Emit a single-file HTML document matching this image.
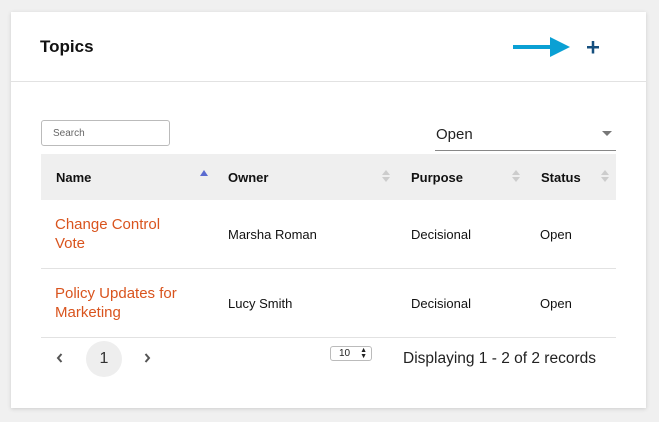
<!DOCTYPE html>
<html><head><style>
*{margin:0;padding:0;box-sizing:border-box}
body{width:659px;height:422px;background:#f0f0f0;font-family:"Liberation Sans",Arial,sans-serif;position:relative;overflow:hidden}
.card{position:absolute;left:11px;top:12px;width:635px;height:396px;background:#fff;box-shadow:0 1px 4px rgba(0,0,0,.15)}
.abs{position:absolute}
.title{left:29px;top:25px;font-size:17px;font-weight:bold;color:#111}
.hline{left:0;top:69px;width:635px;height:1px;background:#e2e2e2}
.search{left:30px;top:108px;width:129px;height:26px;border:1px solid #bbb;border-radius:3px;font-size:10px;color:#666;padding:7px 0 0 11px}
.sel{left:424px;top:114px;width:181px;height:25px;border-bottom:1px solid #888;font-size:15px;color:#222;padding-left:1px}
.thead{left:30px;top:142px;width:575px;height:46px;background:#efefef}
.th{top:158px;font-size:13px;font-weight:bold;color:#111}
.td{font-size:13px;color:#111}
.link{font-size:15px;color:#d9541e;line-height:19px}
.rl{left:30px;width:575px;height:1px;background:#e2e2e2}
.sort{width:0;height:0;border-left:4px solid transparent;border-right:4px solid transparent}
</style></head><body>
<div class="card">
<div class="abs title">Topics</div>
<svg class="abs" style="left:501px;top:22px" width="90" height="26"><rect x="1" y="11" width="40" height="4" fill="#0aa0d4"/><polygon points="38,3 58,13 38,23" fill="#0aa0d4"/><rect x="75" y="12" width="12" height="2.5" fill="#154f7e"/><rect x="79.75" y="7" width="2.5" height="12.5" fill="#154f7e"/></svg>
<div class="abs hline"></div>
<div class="abs search">Search</div>
<div class="abs sel">Open<div class="abs" style="right:4px;top:5px;width:0;height:0;border-left:5px solid transparent;border-right:5px solid transparent;border-top:5px solid #777"></div></div>
<div class="abs thead"></div>
<div class="abs th" style="left:45px">Name</div>
<div class="abs sort" style="left:189px;top:158px;border-bottom:6px solid #5a6bd0"></div>
<div class="abs th" style="left:217px">Owner</div>
<div class="abs sort" style="left:371px;top:158px;border-bottom:5px solid #ccc"></div><div class="abs sort" style="left:371px;top:165px;border-top:5px solid #ccc"></div>
<div class="abs th" style="left:400px">Purpose</div>
<div class="abs sort" style="left:501px;top:158px;border-bottom:5px solid #ccc"></div><div class="abs sort" style="left:501px;top:165px;border-top:5px solid #ccc"></div>
<div class="abs th" style="left:530px">Status</div>
<div class="abs sort" style="left:590px;top:158px;border-bottom:5px solid #ccc"></div><div class="abs sort" style="left:590px;top:165px;border-top:5px solid #ccc"></div>
<div class="abs link" style="left:44px;top:203px">Change Control<br>Vote</div>
<div class="abs td" style="left:217px;top:215px">Marsha Roman</div>
<div class="abs td" style="left:400px;top:215px">Decisional</div>
<div class="abs td" style="left:529px;top:215px">Open</div>
<div class="abs rl" style="top:256px"></div>
<div class="abs link" style="left:44px;top:272px">Policy Updates for<br>Marketing</div>
<div class="abs td" style="left:217px;top:284px">Lucy Smith</div>
<div class="abs td" style="left:400px;top:284px">Decisional</div>
<div class="abs td" style="left:529px;top:284px">Open</div>
<div class="abs rl" style="top:325px"></div>
<svg class="abs" style="left:44px;top:340px" width="10" height="12"><path d="M6.5 2 L3 6 L6.5 10" stroke="#555" stroke-width="2" fill="none"/></svg>
<div class="abs" style="left:75px;top:329px;width:36px;height:36px;border-radius:18px;background:#eee;text-align:center;line-height:36px;font-size:16px;color:#333">1</div>
<svg class="abs" style="left:131px;top:340px" width="10" height="12"><path d="M3.5 2 L7 6 L3.5 10" stroke="#555" stroke-width="2" fill="none"/></svg>
<div class="abs" style="left:319px;top:334px;width:42px;height:15px;border:1px solid #bbb;border-radius:3px;font-size:10px;padding-left:8px;line-height:13px;color:#222">10<span style="position:absolute;right:4px;top:1px;font-size:7px;line-height:6px">▲<br>▼</span></div>
<div class="abs" style="left:392px;top:338px;font-size:15.5px;color:#222">Displaying 1 - 2 of 2 records</div>
</div>
</body></html>
